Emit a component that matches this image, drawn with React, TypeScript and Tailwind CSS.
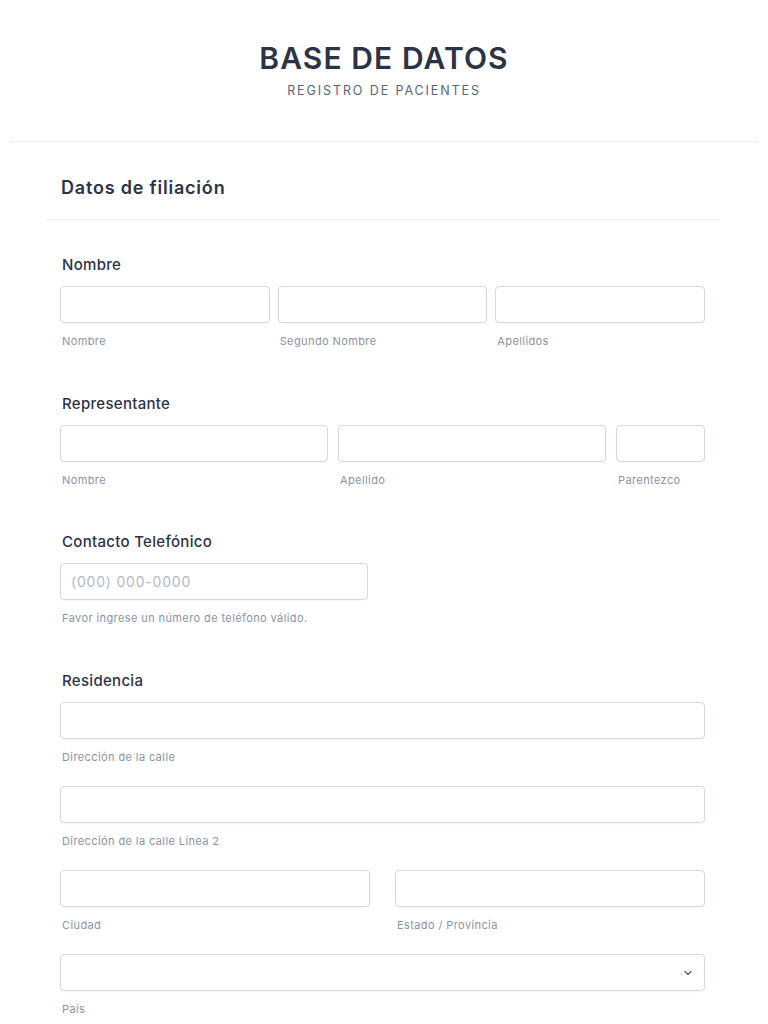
import React from 'react';
import { ChevronDown } from 'lucide-react';

const inputCls =
  'block w-full h-[37px] rounded-[4px] border border-[#d3d8e4] bg-white shadow-[0_1px_2px_rgba(87,100,126,0.06)]';

function SubLabel({ children }: { children: React.ReactNode }) {
  return (
    <p className="mt-[11px] h-[14px] pl-[2px] text-[11px] leading-[14px] tracking-[0.4px] text-[#8c93a6]">
      {children}
    </p>
  );
}

function FieldLabel({ children }: { children: React.ReactNode }) {
  return (
    <p className="h-5 pl-[2px] text-[15px] leading-5 font-medium tracking-[0.3px] text-[#2c3345]">{children}</p>
  );
}

export default function App() {
  return (
    <div className="min-h-screen bg-white font-['Inter','Noto_Sans',sans-serif]">
      <header className="mx-[10px] border-b border-[#eceef3] pt-[40px] pb-[42px] text-center">
        <h1 className="text-[30px] leading-9 font-semibold text-[#2c3345] tracking-[1.1px]">BASE DE DATOS</h1>
        <p className="mt-[7px] text-[12.5px] leading-4 text-[#57647e] tracking-[1.9px]">REGISTRO DE PACIENTES</p>
      </header>

      <main className="px-[46px]">
        <div className="w-[672px] border-b border-[#eceef3] pt-[34px] pb-[19px] pl-[15px]">
          <h2 className="text-[18px] leading-6 font-semibold tracking-[0.8px] text-[#2c3345]">Datos de filiación</h2>
        </div>

        <div className="w-[672px] pl-[14px] pr-[13px] pt-[35px]">
          {/* Nombre */}
          <section>
            <FieldLabel>Nombre</FieldLabel>
            <div className="mt-[11px] grid grid-cols-3 gap-2">
              <div>
                <input className={inputCls} />
                <SubLabel>Nombre</SubLabel>
              </div>
              <div>
                <input className={inputCls} />
                <SubLabel>Segundo Nombre</SubLabel>
              </div>
              <div>
                <input className={inputCls} />
                <SubLabel>Apellidos</SubLabel>
              </div>
            </div>
          </section>

          {/* Representante */}
          <section className="mt-[46px]">
            <FieldLabel>Representante</FieldLabel>
            <div className="mt-[11px] grid grid-cols-[1fr_1fr_89px] gap-[10px]">
              <div>
                <input className={inputCls} />
                <SubLabel>Nombre</SubLabel>
              </div>
              <div>
                <input className={inputCls} />
                <SubLabel>Apellido</SubLabel>
              </div>
              <div>
                <input className={inputCls} />
                <SubLabel>Parentezco</SubLabel>
              </div>
            </div>
          </section>

          {/* Contacto */}
          <section className="mt-[45px]">
            <FieldLabel>Contacto Telefónico</FieldLabel>
            <div className="mt-[11px] w-[308px]">
              <input
                className={`${inputCls} px-[10px] text-[14px] tracking-[0.8px] text-[#2c3345] placeholder:text-[#b4b9c8]`}
                placeholder="(000) 000-0000"
              />
              <SubLabel>Favor ingrese un número de teléfono válido.</SubLabel>
            </div>
          </section>

          {/* Residencia */}
          <section className="mt-[46px]">
            <FieldLabel>Residencia</FieldLabel>
            <div className="mt-[11px]">
              <input className={inputCls} />
              <SubLabel>Dirección de la calle</SubLabel>
            </div>
            <div className="mt-[22px]">
              <input className={inputCls} />
              <SubLabel>Dirección de la calle Línea 2</SubLabel>
            </div>
            <div className="mt-[22px] grid grid-cols-2 gap-[25px]">
              <div>
                <input className={inputCls} />
                <SubLabel>Ciudad</SubLabel>
              </div>
              <div>
                <input className={inputCls} />
                <SubLabel>Estado / Provincia</SubLabel>
              </div>
            </div>
            <div className="mt-[22px]">
              <div className={`${inputCls} flex items-center justify-end pr-[10px]`}>
                <ChevronDown className="h-3 w-3 text-[#57647e]" strokeWidth={2.5} />
              </div>
              <SubLabel>País</SubLabel>
            </div>
          </section>
        </div>
      </main>
    </div>
  );
}
